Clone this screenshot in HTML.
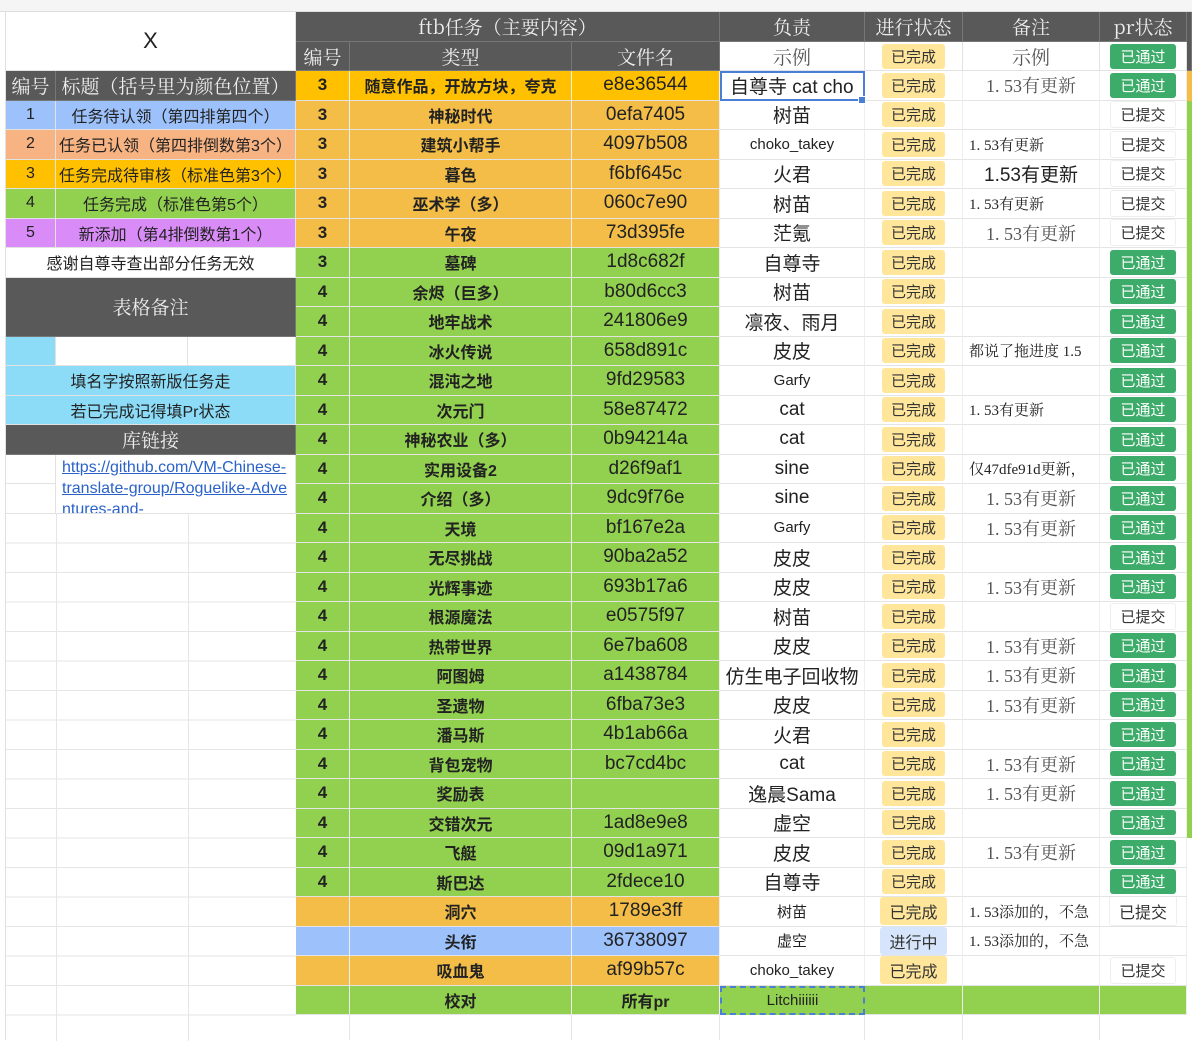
<!DOCTYPE html>
<html><head><meta charset="utf-8"><style>
*{box-sizing:border-box;margin:0;padding:0}
body{width:1192px;height:1040px;position:relative;background:#fff;overflow:hidden;font-family:"Liberation Sans","Noto Sans CJK SC",sans-serif;color:#222}
.a{position:absolute;display:flex;align-items:center;justify-content:center;border-right:1px solid #e2e2e2;border-bottom:1px solid #e2e2e2;white-space:nowrap;overflow:hidden}
.dk{background:#595959;color:#eee;font-family:"Noto Serif CJK SC","Liberation Serif",serif;border-color:#777}
.row{position:absolute;left:296px;height:29.5px;display:flex;width:896px}
.row>div{height:100%;display:flex;align-items:center;justify-content:center;border-right:1px solid #eee;border-bottom:1px solid #e4e4e4;overflow:hidden;white-space:nowrap}
.c{width:54px;font-weight:bold;font-size:17px}
.d{width:222px;font-weight:bold;font-size:16px}
.e{width:148px;font-size:19px}
.f{width:145px;font-size:19px;background:#fff}
.g{width:98px;background:#fff}
.h{width:137px;background:#fff}
.i{width:87px;background:#fff}
.s{width:5px;border:none!important}
.y{background:#ffe69a;border-radius:3px;font-size:15px;padding:2px 9px;color:#333}
.gr{background:#3dab69;border-radius:3px;font-size:15px;padding:2px 10px;color:#fff}
.wt{border:1px solid #eee;border-radius:3px;font-size:15px;padding:2px 9px;color:#333}
.bl{background:#d6e5fb;border-radius:3px;font-size:16px;padding:2px 9px;color:#333}
.sm{font-size:15px}
.na{justify-content:flex-start!important;padding-left:6px;font-size:15px;font-family:"Liberation Serif","Noto Serif CJK SC",serif}
.nc{font-size:18px;color:#555;font-family:"Liberation Serif","Noto Serif CJK SC",serif}
.O{background:#f3bd47}.G{background:#92d050}.B{background:#9cc1fb}
</style></head><body>
<!-- column header strip -->
<div style="position:absolute;left:0;top:0;width:1192px;height:12px;background:#f5f5f5;border-bottom:1px solid #ddd"></div>
<!-- left panel -->
<div class="a" style="left:6px;top:12px;width:290px;height:59px;font-size:22px">X</div>
<div class="a dk" style="left:6px;top:71px;width:50px;height:29.5px;font-size:19px">编号</div>
<div class="a dk" style="left:56px;top:71px;width:240px;height:29.5px;font-size:19px">标题（括号里为颜色位置）</div>
<div class="a" style="left:6px;top:100.5px;width:50px;height:29.5px;background:#9cc1fb;font-size:16px">1</div>
<div class="a" style="left:56px;top:100.5px;width:240px;height:29.5px;background:#9cc1fb;font-size:16px">任务待认领（第四排第四个）</div>
<div class="a" style="left:6px;top:130px;width:50px;height:29.5px;background:#f8b383;font-size:16px">2</div>
<div class="a" style="left:56px;top:130px;width:240px;height:29.5px;background:#f8b383;font-size:16px">任务已认领（第四排倒数第3个）</div>
<div class="a" style="left:6px;top:159.5px;width:50px;height:29.5px;background:#ffc000;font-size:16px">3</div>
<div class="a" style="left:56px;top:159.5px;width:240px;height:29.5px;background:#ffc000;font-size:16px">任务完成待审核（标准色第3个）</div>
<div class="a" style="left:6px;top:189px;width:50px;height:29.5px;background:#92d050;font-size:16px">4</div>
<div class="a" style="left:56px;top:189px;width:240px;height:29.5px;background:#92d050;font-size:16px">任务完成（标准色第5个）</div>
<div class="a" style="left:6px;top:218.5px;width:50px;height:29.5px;background:#d98cf7;font-size:16px">5</div>
<div class="a" style="left:56px;top:218.5px;width:240px;height:29.5px;background:#d98cf7;font-size:16px">新添加（第4排倒数第1个）</div>
<div class="a" style="left:6px;top:248px;width:290px;height:29.5px;font-size:16px">感谢自尊寺查出部分任务无效</div>
<div class="a dk" style="left:6px;top:277.5px;width:290px;height:59px;font-size:19px">表格备注</div>
<div class="a" style="left:6px;top:336.5px;width:50px;height:29.5px;background:#8cdcf8"></div>
<div class="a" style="left:56px;top:336.5px;width:132px;height:29.5px"></div>
<div class="a" style="left:188px;top:336.5px;width:108px;height:29.5px"></div>
<div class="a" style="left:6px;top:366px;width:290px;height:29.5px;background:#8cdcf8;font-size:16px">填名字按照新版任务走</div>
<div class="a" style="left:6px;top:395.5px;width:290px;height:29.5px;background:#8cdcf8;font-size:16px">若已完成记得填Pr状态</div>
<div class="a dk" style="left:6px;top:425px;width:290px;height:29.5px;font-size:19px">库链接</div>
<div class="a" style="left:6px;top:454.5px;width:50px;height:29.5px"></div>
<div class="a" style="left:6px;top:484px;width:50px;height:29.5px"></div>
<div class="a" style="left:56px;top:454.5px;width:240px;height:59px;display:block;padding:2px 6px;font-size:16px;line-height:21px;white-space:normal;word-break:break-all;color:#2a62c9;text-decoration:underline">https://github.com/VM-Chinese-translate-group/Roguelike-Adventures-and-</div>
<div style="position:absolute;left:6px;top:513.5px;width:290px;height:527px;background:
repeating-linear-gradient(to bottom,transparent 0,transparent 28.5px,#e6e6e6 28.5px,#e6e6e6 29.5px)"></div>
<div style="position:absolute;left:56px;top:513.5px;width:1px;height:527px;background:#e6e6e6"></div>
<div style="position:absolute;left:188px;top:513.5px;width:1px;height:527px;background:#e6e6e6"></div>
<div style="position:absolute;left:5px;top:12px;width:1px;height:1028px;background:#e0e0e0"></div>
<!-- top right headers -->
<div class="a dk" style="left:296px;top:12px;width:424px;height:30px;font-size:19px">ftb任务（主要内容）</div>
<div class="a dk" style="left:296px;top:42px;width:54px;height:29px;font-size:19px">编号</div>
<div class="a dk" style="left:350px;top:42px;width:222px;height:29px;font-size:19px">类型</div>
<div class="a dk" style="left:572px;top:42px;width:148px;height:29px;font-size:19px">文件名</div>
<div class="a dk" style="left:720px;top:12px;width:145px;height:30px;font-size:19px">负责</div>
<div class="a dk" style="left:865px;top:12px;width:98px;height:30px;font-size:19px">进行状态</div>
<div class="a dk" style="left:963px;top:12px;width:137px;height:30px;font-size:19px">备注</div>
<div class="a dk" style="left:1100px;top:12px;width:87px;height:30px;font-size:19px">pr状态</div>
<div class="a dk" style="left:1187px;top:12px;width:5px;height:59px"></div>
<div class="a nc" style="left:720px;top:42px;width:145px;height:29px;font-size:19px">示例</div>
<div class="a" style="left:865px;top:42px;width:98px;height:29px"><span class="y">已完成</span></div>
<div class="a nc" style="left:963px;top:42px;width:137px;height:29px;font-size:19px">示例</div>
<div class="a" style="left:1100px;top:42px;width:87px;height:29px"><span class="gr">已通过</span></div>

<div class="row" style="top:71px"><div class="c" style="background:#ffc000">3</div><div class="d" style="background:#ffc000">随意作品，开放方块，夸克</div><div class="e" style="background:#ffc000">e8e36544</div><div class="f" style="border:2px solid #4a7fd8;justify-content:flex-start;padding-left:8px">自尊寺 cat cho</div><div class="g"><span class="y">已完成</span></div><div class="h nc">1. 53有更新</div><div class="i"><span class="gr">已通过</span></div><div class="s" style="background:#f3bd47"></div></div>
<div class="row O" style="top:100.5px"><div class="c">3</div><div class="d">神秘时代</div><div class="e">0efa7405</div><div class="f">树苗</div><div class="g"><span class="y">已完成</span></div><div class="h"></div><div class="i"><span class="wt">已提交</span></div><div class="s G"></div></div>
<div class="row O" style="top:130px"><div class="c">3</div><div class="d">建筑小帮手</div><div class="e">4097b508</div><div class="f sm">choko_takey</div><div class="g"><span class="y">已完成</span></div><div class="h na">1. 53有更新</div><div class="i"><span class="wt">已提交</span></div><div class="s G"></div></div>
<div class="row O" style="top:159.5px"><div class="c">3</div><div class="d">暮色</div><div class="e">f6bf645c</div><div class="f">火君</div><div class="g"><span class="y">已完成</span></div><div class="h" style="font-size:19px">1.53有更新</div><div class="i"><span class="wt">已提交</span></div><div class="s G"></div></div>
<div class="row O" style="top:189px"><div class="c">3</div><div class="d">巫术学（多）</div><div class="e">060c7e90</div><div class="f">树苗</div><div class="g"><span class="y">已完成</span></div><div class="h na">1. 53有更新</div><div class="i"><span class="wt">已提交</span></div><div class="s G"></div></div>
<div class="row O" style="top:218.5px"><div class="c">3</div><div class="d">午夜</div><div class="e">73d395fe</div><div class="f">茫氪</div><div class="g"><span class="y">已完成</span></div><div class="h nc">1. 53有更新</div><div class="i"><span class="wt">已提交</span></div><div class="s G"></div></div>
<div class="row G" style="top:248px"><div class="c">3</div><div class="d">墓碑</div><div class="e">1d8c682f</div><div class="f">自尊寺</div><div class="g"><span class="y">已完成</span></div><div class="h"></div><div class="i"><span class="gr">已通过</span></div><div class="s G"></div></div>
<div class="row G" style="top:277.5px"><div class="c">4</div><div class="d">余烬（巨多）</div><div class="e">b80d6cc3</div><div class="f">树苗</div><div class="g"><span class="y">已完成</span></div><div class="h"></div><div class="i"><span class="gr">已通过</span></div><div class="s G"></div></div>
<div class="row G" style="top:307px"><div class="c">4</div><div class="d">地牢战术</div><div class="e">241806e9</div><div class="f">凛夜、雨月</div><div class="g"><span class="y">已完成</span></div><div class="h"></div><div class="i"><span class="gr">已通过</span></div><div class="s G"></div></div>
<div class="row G" style="top:336.5px"><div class="c">4</div><div class="d">冰火传说</div><div class="e">658d891c</div><div class="f">皮皮</div><div class="g"><span class="y">已完成</span></div><div class="h na">都说了拖进度 1.5</div><div class="i"><span class="gr">已通过</span></div><div class="s G"></div></div>
<div class="row G" style="top:366px"><div class="c">4</div><div class="d">混沌之地</div><div class="e">9fd29583</div><div class="f sm">Garfy</div><div class="g"><span class="y">已完成</span></div><div class="h"></div><div class="i"><span class="gr">已通过</span></div><div class="s G"></div></div>
<div class="row G" style="top:395.5px"><div class="c">4</div><div class="d">次元门</div><div class="e">58e87472</div><div class="f">cat</div><div class="g"><span class="y">已完成</span></div><div class="h na">1. 53有更新</div><div class="i"><span class="gr">已通过</span></div><div class="s G"></div></div>
<div class="row G" style="top:425px"><div class="c">4</div><div class="d">神秘农业（多）</div><div class="e">0b94214a</div><div class="f">cat</div><div class="g"><span class="y">已完成</span></div><div class="h"></div><div class="i"><span class="gr">已通过</span></div><div class="s G"></div></div>
<div class="row G" style="top:454.5px"><div class="c">4</div><div class="d">实用设备2</div><div class="e">d26f9af1</div><div class="f">sine</div><div class="g"><span class="y">已完成</span></div><div class="h na">仅47dfe91d更新，</div><div class="i"><span class="gr">已通过</span></div><div class="s G"></div></div>
<div class="row G" style="top:484px"><div class="c">4</div><div class="d">介绍（多）</div><div class="e">9dc9f76e</div><div class="f">sine</div><div class="g"><span class="y">已完成</span></div><div class="h nc">1. 53有更新</div><div class="i"><span class="gr">已通过</span></div><div class="s G"></div></div>
<div class="row G" style="top:513.5px"><div class="c">4</div><div class="d">天境</div><div class="e">bf167e2a</div><div class="f sm">Garfy</div><div class="g"><span class="y">已完成</span></div><div class="h nc">1. 53有更新</div><div class="i"><span class="gr">已通过</span></div><div class="s G"></div></div>
<div class="row G" style="top:543px"><div class="c">4</div><div class="d">无尽挑战</div><div class="e">90ba2a52</div><div class="f">皮皮</div><div class="g"><span class="y">已完成</span></div><div class="h"></div><div class="i"><span class="gr">已通过</span></div><div class="s G"></div></div>
<div class="row G" style="top:572.5px"><div class="c">4</div><div class="d">光辉事迹</div><div class="e">693b17a6</div><div class="f">皮皮</div><div class="g"><span class="y">已完成</span></div><div class="h nc">1. 53有更新</div><div class="i"><span class="gr">已通过</span></div><div class="s G"></div></div>
<div class="row G" style="top:602px"><div class="c">4</div><div class="d">根源魔法</div><div class="e">e0575f97</div><div class="f">树苗</div><div class="g"><span class="y">已完成</span></div><div class="h"></div><div class="i"><span class="wt">已提交</span></div><div class="s G"></div></div>
<div class="row G" style="top:631.5px"><div class="c">4</div><div class="d">热带世界</div><div class="e">6e7ba608</div><div class="f">皮皮</div><div class="g"><span class="y">已完成</span></div><div class="h nc">1. 53有更新</div><div class="i"><span class="gr">已通过</span></div><div class="s G"></div></div>
<div class="row G" style="top:661px"><div class="c">4</div><div class="d">阿图姆</div><div class="e">a1438784</div><div class="f">仿生电子回收物</div><div class="g"><span class="y">已完成</span></div><div class="h nc">1. 53有更新</div><div class="i"><span class="gr">已通过</span></div><div class="s G"></div></div>
<div class="row G" style="top:690.5px"><div class="c">4</div><div class="d">圣遗物</div><div class="e">6fba73e3</div><div class="f">皮皮</div><div class="g"><span class="y">已完成</span></div><div class="h nc">1. 53有更新</div><div class="i"><span class="gr">已通过</span></div><div class="s G"></div></div>
<div class="row G" style="top:720px"><div class="c">4</div><div class="d">潘马斯</div><div class="e">4b1ab66a</div><div class="f">火君</div><div class="g"><span class="y">已完成</span></div><div class="h"></div><div class="i"><span class="gr">已通过</span></div><div class="s G"></div></div>
<div class="row G" style="top:749.5px"><div class="c">4</div><div class="d">背包宠物</div><div class="e">bc7cd4bc</div><div class="f">cat</div><div class="g"><span class="y">已完成</span></div><div class="h nc">1. 53有更新</div><div class="i"><span class="gr">已通过</span></div><div class="s G"></div></div>
<div class="row G" style="top:779px"><div class="c">4</div><div class="d">奖励表</div><div class="e"></div><div class="f">逸晨Sama</div><div class="g"><span class="y">已完成</span></div><div class="h nc">1. 53有更新</div><div class="i"><span class="gr">已通过</span></div><div class="s G"></div></div>
<div class="row G" style="top:808.5px"><div class="c">4</div><div class="d">交错次元</div><div class="e">1ad8e9e8</div><div class="f">虚空</div><div class="g"><span class="y">已完成</span></div><div class="h"></div><div class="i"><span class="gr">已通过</span></div><div class="s"></div></div>
<div class="row G" style="top:838px"><div class="c">4</div><div class="d">飞艇</div><div class="e">09d1a971</div><div class="f">皮皮</div><div class="g"><span class="y">已完成</span></div><div class="h nc">1. 53有更新</div><div class="i"><span class="gr">已通过</span></div><div class="s" style="background:#fff"></div></div>
<div class="row G" style="top:867.5px"><div class="c">4</div><div class="d">斯巴达</div><div class="e">2fdece10</div><div class="f">自尊寺</div><div class="g"><span class="y">已完成</span></div><div class="h"></div><div class="i"><span class="gr">已通过</span></div><div class="s" style="background:#fff"></div></div>
<div class="row O" style="top:897px"><div class="c"></div><div class="d">洞穴</div><div class="e">1789e3ff</div><div class="f sm">树苗</div><div class="g"><span class="y" style="font-size:16px">已完成</span></div><div class="h na">1. 53添加的，不急</div><div class="i"><span class="wt" style="font-size:16px">已提交</span></div><div class="s" style="background:#fff"></div></div>
<div class="row B" style="top:926.5px"><div class="c"></div><div class="d">头衔</div><div class="e">36738097</div><div class="f sm">虚空</div><div class="g"><span class="bl">进行中</span></div><div class="h na">1. 53添加的，不急</div><div class="i"></div><div class="s" style="background:#fff"></div></div>
<div class="row O" style="top:956px"><div class="c"></div><div class="d">吸血鬼</div><div class="e">af99b57c</div><div class="f sm">choko_takey</div><div class="g"><span class="y" style="font-size:16px">已完成</span></div><div class="h"></div><div class="i"><span class="wt">已提交</span></div><div class="s" style="background:#fff"></div></div>
<div class="row G" style="top:985.5px"><div class="c"></div><div class="d">校对</div><div class="e" style="font-weight:bold;font-size:16px">所有pr</div><div class="f sm" style="background:#92d050;border:2px dashed #4a7fd8">Litchiiiiii</div><div class="g" style="background:#92d050"></div><div class="h" style="background:#92d050"></div><div class="i" style="background:#92d050"></div><div class="s" style="background:#fff"></div></div>
<div style="position:absolute;left:858px;top:96px;width:8px;height:8px;background:#4a7fd8;border:1px solid #fff"></div>
<!-- empty bottom grid -->
<div style="position:absolute;left:296px;top:1015px;width:896px;height:25px;background:linear-gradient(to right,transparent 0,transparent 53px,#e6e6e6 53px,#e6e6e6 54px,transparent 54px,transparent 275px,#e6e6e6 275px,#e6e6e6 276px,transparent 276px,transparent 423px,#e6e6e6 423px,#e6e6e6 424px,transparent 424px,transparent 568px,#e6e6e6 568px,#e6e6e6 569px,transparent 569px,transparent 666px,#e6e6e6 666px,#e6e6e6 667px,transparent 667px,transparent 803px,#e6e6e6 803px,#e6e6e6 804px,transparent 804px)"></div>
</body></html>
